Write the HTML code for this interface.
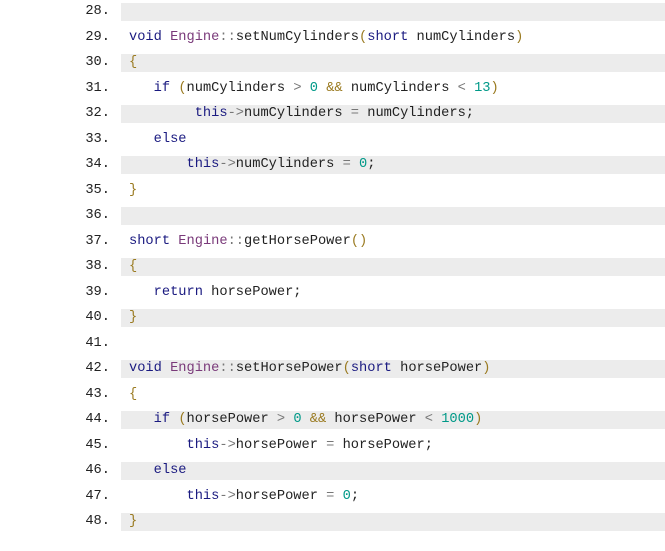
<!DOCTYPE html>
<html><head><style>
body{margin:0;width:665px;height:551px;background:#fff;position:relative;overflow:hidden;font-family:"Liberation Mono",monospace;font-size:13.7px;}
.l{position:absolute;left:0;width:665px;height:18px;line-height:18px;}
.g .c{background:#ececec;}
.n{position:absolute;right:555px;color:#222;top:0;}
.c{position:absolute;left:121px;right:0;top:0;height:18px;padding-left:8px;white-space:pre;color:#222;}
.k{color:#1a1a80}.t{color:#7a3a7a}.p{color:#9a7a20}.o{color:#777}.d{color:#098}
</style></head><body>
<div class="l g" style="top:3px"><span class="n">28.</span><div class="c"></div></div>
<div class="l" style="top:28.5px"><span class="n">29.</span><div class="c"><span class="k">void</span> <span class="t">Engine</span><span class="o">::</span>setNumCylinders<span class="p">(</span><span class="k">short</span> numCylinders<span class="p">)</span></div></div>
<div class="l g" style="top:54px"><span class="n">30.</span><div class="c"><span class="p">{</span></div></div>
<div class="l" style="top:79.5px"><span class="n">31.</span><div class="c">   <span class="k">if</span> <span class="p">(</span>numCylinders <span class="o">&gt;</span> <span class="d">0</span> <span class="p">&amp;&amp;</span> numCylinders <span class="o">&lt;</span> <span class="d">13</span><span class="p">)</span></div></div>
<div class="l g" style="top:105px"><span class="n">32.</span><div class="c">        <span class="k">this</span><span class="o">-&gt;</span>numCylinders <span class="o">=</span> numCylinders;</div></div>
<div class="l" style="top:130.5px"><span class="n">33.</span><div class="c">   <span class="k">else</span></div></div>
<div class="l g" style="top:156px"><span class="n">34.</span><div class="c">       <span class="k">this</span><span class="o">-&gt;</span>numCylinders <span class="o">=</span> <span class="d">0</span>;</div></div>
<div class="l" style="top:181.5px"><span class="n">35.</span><div class="c"><span class="p">}</span></div></div>
<div class="l g" style="top:207px"><span class="n">36.</span><div class="c"></div></div>
<div class="l" style="top:232.5px"><span class="n">37.</span><div class="c"><span class="k">short</span> <span class="t">Engine</span><span class="o">::</span>getHorsePower<span class="p">()</span></div></div>
<div class="l g" style="top:258px"><span class="n">38.</span><div class="c"><span class="p">{</span></div></div>
<div class="l" style="top:283.5px"><span class="n">39.</span><div class="c">   <span class="k">return</span> horsePower;</div></div>
<div class="l g" style="top:309px"><span class="n">40.</span><div class="c"><span class="p">}</span></div></div>
<div class="l" style="top:334.5px"><span class="n">41.</span><div class="c"></div></div>
<div class="l g" style="top:360px"><span class="n">42.</span><div class="c"><span class="k">void</span> <span class="t">Engine</span><span class="o">::</span>setHorsePower<span class="p">(</span><span class="k">short</span> horsePower<span class="p">)</span></div></div>
<div class="l" style="top:385.5px"><span class="n">43.</span><div class="c"><span class="p">{</span></div></div>
<div class="l g" style="top:411px"><span class="n">44.</span><div class="c">   <span class="k">if</span> <span class="p">(</span>horsePower <span class="o">&gt;</span> <span class="d">0</span> <span class="p">&amp;&amp;</span> horsePower <span class="o">&lt;</span> <span class="d">1000</span><span class="p">)</span></div></div>
<div class="l" style="top:436.5px"><span class="n">45.</span><div class="c">       <span class="k">this</span><span class="o">-&gt;</span>horsePower <span class="o">=</span> horsePower;</div></div>
<div class="l g" style="top:462px"><span class="n">46.</span><div class="c">   <span class="k">else</span></div></div>
<div class="l" style="top:487.5px"><span class="n">47.</span><div class="c">       <span class="k">this</span><span class="o">-&gt;</span>horsePower <span class="o">=</span> <span class="d">0</span>;</div></div>
<div class="l g" style="top:513px"><span class="n">48.</span><div class="c"><span class="p">}</span></div></div>
</body></html>
